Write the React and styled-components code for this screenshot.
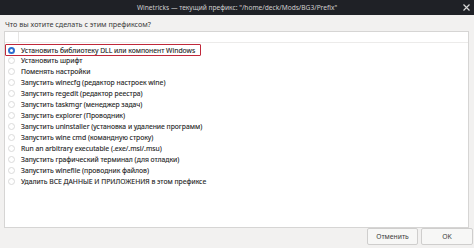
import styled, { createGlobalStyle } from 'styled-components'

const GlobalStyle = createGlobalStyle`
  html, body {
    margin: 0;
    padding: 0;
    background: #f2f1f0;
    font-family: "Noto Sans", "DejaVu Sans", sans-serif;
  }
`

const items = [
  'Установить библиотеку DLL или компонент Windows',
  'Установить шрифт',
  'Поменять настройки',
  'Запустить winecfg (редактор настроек wine)',
  'Запустить regedit (редактор реестра)',
  'Запустить taskmgr (менеджер задач)',
  'Запустить explorer (Проводник)',
  'Запустить uninstaller (установка и удаление программ)',
  'Запустить wine cmd (командную строку)',
  'Run an arbitrary executable (.exe/.msi/.msu)',
  'Запустить графический терминал (для отладки)',
  'Запустить winefile (проводник файлов)',
  'Удалить ВСЕ ДАННЫЕ И ПРИЛОЖЕНИЯ в этом префиксе',
]

const App = () => {
  return (
    <Window>
      <GlobalStyle />
      <TitleBar>
        <Title>Winetricks — текущий префикс: "/home/deck/Mods/BG3/Prefix"</Title>
        <Close>
          <svg width='7' height='7' viewBox='0 0 7 7'>
            <path d='M0.5 0.5 L6.5 6.5 M6.5 0.5 L0.5 6.5' stroke='#d8d8d8' strokeWidth='1.2' />
          </svg>
        </Close>
      </TitleBar>
      <Body>
        <Question>Что вы хотите сделать с этим префиксом?</Question>
        <ListBox>
          <HeaderRow>
            <HeaderCell />
          </HeaderRow>
          <Rows>
            {items.map((text, i) => (
              <Row key={text} $selected={i === 0}>
                <Radio $checked={i === 0} />
                <RowText>{text}</RowText>
              </Row>
            ))}
          </Rows>
        </ListBox>
      </Body>
      <Footer>
        <Button>Отменить</Button>
        <Button $wide>OK</Button>
      </Footer>
    </Window>
  )
}

export default App

const Window = styled.div`
  width: 474px;
  height: 248px;
  display: flex;
  flex-direction: column;
  background: #f2f1f0;
  overflow: hidden;
`

const TitleBar = styled.div`
  height: 15px;
  background: #1f2126;
  display: flex;
  align-items: center;
  justify-content: center;
  position: relative;
`

const Title = styled.div`
  color: #cfcfcf;
  font-size: 6.6px;
  white-space: nowrap;
`

const Close = styled.div`
  position: absolute;
  right: 4px;
  top: 4px;
  display: flex;
`

const Body = styled.div`
  padding: 0 5px 0 4px;
  display: flex;
  flex-direction: column;
`

const Question = styled.div`
  height: 16px;
  line-height: 18px;
  font-size: 7.2px;
  color: #3a3a3a;
  padding-left: 1px;
`

const ListBox = styled.div`
  height: 197px;
  background: #ffffff;
  border: 1px solid #d6d5d4;
  box-sizing: border-box;
  display: flex;
  flex-direction: column;
`

const HeaderRow = styled.div`
  height: 10px;
  border-bottom: 1px solid #ecebea;
  display: flex;
`

const HeaderCell = styled.div`
  width: 13px;
  border-right: 1px solid #e6e5e4;
`

const Rows = styled.div`
  padding-top: 1px;
  display: flex;
  flex-direction: column;
`

const Row = styled.div`
  height: 11px;
  display: flex;
  align-items: center;
  box-sizing: border-box;
  width: 196px;
  padding-left: 2px;
  border: 1px solid ${p => (p.$selected ? '#c0283a' : 'transparent')};
  border-radius: 1px;
  ${p => p.$selected && 'height: 12px; margin-bottom: -1px;'}
`

const Radio = styled.span`
  width: 7px;
  height: 7px;
  border-radius: 50%;
  box-sizing: border-box;
  flex: none;
  margin-right: 6px;
  border: ${p => (p.$checked ? '2px solid #2f6fd0' : '1px solid #dadada')};
  background: #ffffff;
`

const RowText = styled.span`
  font-size: 6.8px;
  color: #222222;
  white-space: nowrap;
  -webkit-text-stroke: 0.1px #222222;
`

const Footer = styled.div`
  flex: 1;
  display: flex;
  justify-content: flex-end;
  align-items: flex-start;
  gap: 3px;
  padding-right: 1px;
`

const Button = styled.div`
  width: ${p => (p.$wide ? '52px' : '51px')};
  height: 17px;
  box-sizing: border-box;
  border: 1px solid #cfcecd;
  border-radius: 2px;
  background: #f7f7f6;
  display: flex;
  align-items: center;
  justify-content: center;
  font-size: 6.8px;
  color: #3a3a3a;
`
